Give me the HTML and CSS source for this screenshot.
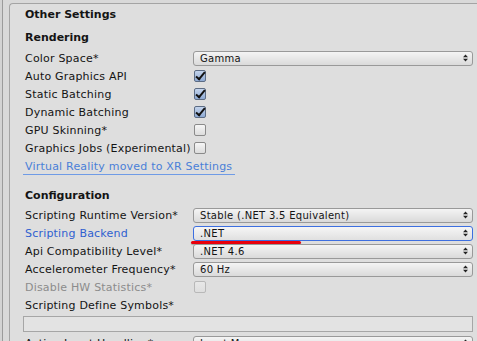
FILE: index.html
```html
<!DOCTYPE html>
<html lang="en">
<head>
  <meta charset="UTF-8">
  <title>Other Settings</title>
  <link rel="stylesheet" href="styles.css">
</head>
<body>
  <div class="shell">
    <div class="inner">
      <div class="panel">
        <div class="title">Other Settings</div>

        <div class="section">Rendering</div>
        <div class="row">
          <div class="label">Color Space*</div>
          <div class="value"><div class="popup">Gamma<svg class="arrows" width="5" height="8" viewBox="0 0 5 8"><path d="M0 3.2L2.5 0.4 5 3.2Z M0 4.8L2.5 7.6 5 4.8Z"/></svg></div></div>
        </div>
        <div class="row">
          <div class="label">Auto Graphics API</div>
          <div class="value"><span class="check on"></span></div>
        </div>
        <div class="row">
          <div class="label">Static Batching</div>
          <div class="value"><span class="check on"></span></div>
        </div>
        <div class="row">
          <div class="label">Dynamic Batching</div>
          <div class="value"><span class="check on"></span></div>
        </div>
        <div class="row">
          <div class="label">GPU Skinning*</div>
          <div class="value"><span class="check"></span></div>
        </div>
        <div class="row">
          <div class="label">Graphics Jobs (Experimental)</div>
          <div class="value"><span class="check"></span></div>
        </div>
        <div class="row">
          <span class="link">Virtual Reality moved to XR Settings</span>
        </div>

        <div class="section config">Configuration</div>
        <div class="row">
          <div class="label">Scripting Runtime Version*</div>
          <div class="value"><div class="popup">Stable (.NET 3.5 Equivalent)<svg class="arrows" width="5" height="8" viewBox="0 0 5 8"><path d="M0 3.2L2.5 0.4 5 3.2Z M0 4.8L2.5 7.6 5 4.8Z"/></svg></div></div>
        </div>
        <div class="row">
          <div class="label active">Scripting Backend</div>
          <div class="value">
            <div class="popup focus">.NET<svg class="arrows" width="5" height="8" viewBox="0 0 5 8"><path d="M0 3.2L2.5 0.4 5 3.2Z M0 4.8L2.5 7.6 5 4.8Z"/></svg></div>
            <div class="marker"></div>
          </div>
        </div>
        <div class="row">
          <div class="label">Api Compatibility Level*</div>
          <div class="value"><div class="popup">.NET 4.6<svg class="arrows" width="5" height="8" viewBox="0 0 5 8"><path d="M0 3.2L2.5 0.4 5 3.2Z M0 4.8L2.5 7.6 5 4.8Z"/></svg></div></div>
        </div>
        <div class="row">
          <div class="label">Accelerometer Frequency*</div>
          <div class="value"><div class="popup">60 Hz<svg class="arrows" width="5" height="8" viewBox="0 0 5 8"><path d="M0 3.2L2.5 0.4 5 3.2Z M0 4.8L2.5 7.6 5 4.8Z"/></svg></div></div>
        </div>
        <div class="row">
          <div class="label disabled">Disable HW Statistics*</div>
          <div class="value"><span class="check off"></span></div>
        </div>
        <div class="row">
          <div class="label wide">Scripting Define Symbols*</div>
        </div>
        <div class="field"></div>
        <div class="row">
          <div class="label">Active Input Handling*</div>
          <div class="value"><div class="popup">Input Manager<svg class="arrows" width="5" height="8" viewBox="0 0 5 8"><path d="M0 3.2L2.5 0.4 5 3.2Z M0 4.8L2.5 7.6 5 4.8Z"/></svg></div></div>
        </div>
      </div>
    </div>
  </div>
</body>
</html>
```

FILE: styles.css
```css
body {
  margin: 0;
  background: #d3d3d3;
  font-family: "DejaVu Sans", sans-serif;
  font-size: 11px;
  color: #141414;
  overflow: hidden;
  height: 341px;
}
.shell { padding-left: 2px; }
.inner {
  border-left: 1px solid #9b9b9b;
  padding-left: 6px;
  padding-top: 3px;
  background: #d9d9d9;
  height: 400px;
}
.panel {
  background: #dedede;
  border: 1px solid #a4a4a4;
  border-right: none;
  border-top-left-radius: 4px;
  padding: 2px 4px 0 15px;
  height: 400px;
}
.title {
  font-weight: bold;
  height: 18px;
  line-height: 18px;
}
.section {
  font-weight: bold;
  height: 18px;
  line-height: 18px;
  margin: 5px 0 2px;
}
.section.config { margin: 12px 0 1px; }
.row {
  display: flex;
  align-items: center;
  height: 18px;
  letter-spacing: 0.2px;
}
.label {
  width: 168px;
  flex: none;
  white-space: nowrap;
}
.label.wide { width: auto; }
.label.active { color: #2f60d0; }
.label.disabled { color: #8c8c8c; }
.value {
  flex: 1;
  position: relative;
  display: flex;
  align-items: center;
}
.popup {
  flex: 1;
  height: 13px;
  line-height: 13px;
  font-size: 10px;
  letter-spacing: 0.3px;
  padding: 0 4px 0 6px;
  border: 1px solid #999;
  border-radius: 3px;
  background: linear-gradient(#f4f4f4, #dadada);
  display: flex;
  align-items: center;
  justify-content: space-between;
}
.popup.focus {
  border-color: #3d6fe0;
  background: linear-gradient(#f6f6f6, #e0e0e0);
}
.arrows { fill: #222; }
.marker {
  position: absolute;
  left: -2px;
  top: 15px;
  width: 110px;
  height: 3px;
  border-radius: 2px;
  background: #e8000c;
  box-shadow: 0 1px 1px rgba(0,0,0,0.25);
}
.check {
  position: relative;
  width: 10px;
  height: 10px;
  margin-left: 1px;
  border: 1px solid #8a8a8a;
  border-radius: 2px;
  background: linear-gradient(#f6f6f6, #dcdcdc);
}
.check.on {
  border-color: #5c6c84;
  background: linear-gradient(#c4d4ec, #8eaad4);
}
.check.on::after {
  content: "";
  position: absolute;
  left: 3px;
  top: -1px;
  width: 3px;
  height: 8px;
  border: solid #111;
  border-width: 0 2px 2px 0;
  transform: rotate(40deg);
}
.check.off {
  border-color: #b8b8b8;
  background: linear-gradient(#e8e8e8, #dedede);
}
.link {
  color: #4a7ed8;
  margin-left: -2px;
  padding: 0 3px 0 2px;
  line-height: 14px;
  border-bottom: 1px solid #6f9be6;
  margin-top: 3px;
}
.field {
  margin: 2px 0 2px -2px;
  height: 14px;
  border: 1px solid #a6a6a6;
  background: #e3e3e3;
}
```
